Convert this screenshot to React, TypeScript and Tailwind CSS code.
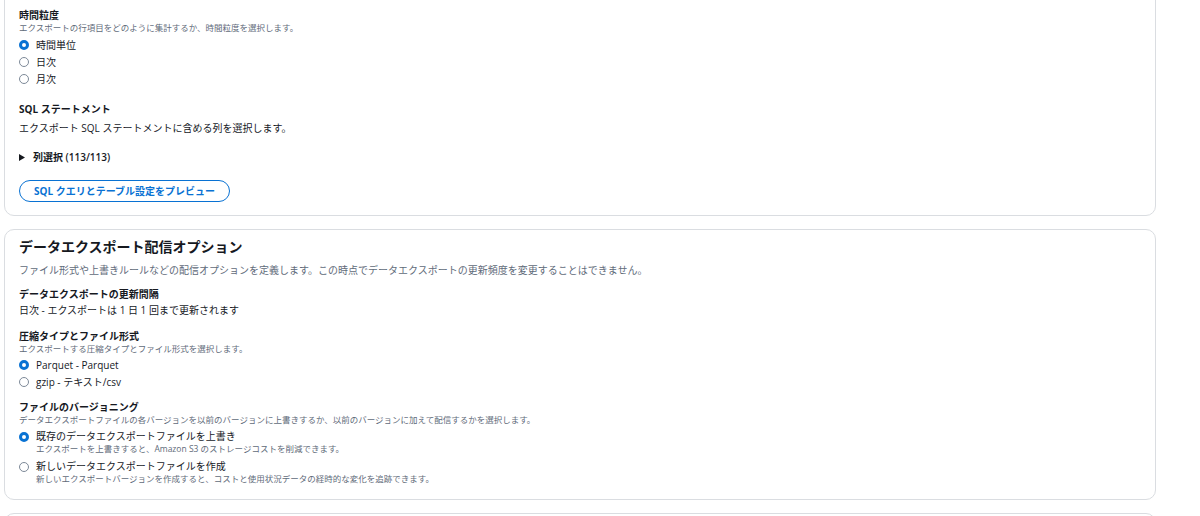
function Radio({ checked }: { checked?: boolean }) {
  return checked ? (
    <span className="box-border block h-[10px] w-[10px] shrink-0 rounded-full border-[3px] border-[#0972d3] bg-white" />
  ) : (
    <span className="box-border block h-[10px] w-[10px] shrink-0 rounded-full border border-[#7d8998] bg-white" />
  );
}

function Option({ label, checked }: { label: string; checked?: boolean }) {
  return (
    <div className="flex h-[17px] items-center gap-[7px]">
      <Radio checked={checked} />
      <span className="text-[10px] leading-[14px] text-[#16191f]">{label}</span>
    </div>
  );
}

function DescOption({ label, desc, checked }: { label: string; desc: string; checked?: boolean }) {
  return (
    <div className="flex flex-col">
      <div className="flex h-[13px] items-center gap-[7px]">
        <Radio checked={checked} />
        <span className="text-[10px] leading-[13px] text-[#16191f]">{label}</span>
      </div>
      <span className="pl-[17px] text-[8.5px] leading-[12px] text-[#5f6b7a]">{desc}</span>
    </div>
  );
}

function Label({ children, className = "" }: { children: React.ReactNode; className?: string }) {
  return <div className={`text-[10px] font-bold leading-[14px] text-[#16191f] ${className}`}>{children}</div>;
}

function Hint({ children, className = "" }: { children: React.ReactNode; className?: string }) {
  return <div className={`text-[8.5px] leading-[12px] text-[#5f6b7a] ${className}`}>{children}</div>;
}

export default function App() {
  return (
    <div className="h-[516px] w-[1200px] overflow-hidden bg-white font-['Open_Sans','Noto_Sans_CJK_JP',sans-serif]">
      <div className="flex w-[1156px] flex-col gap-[13px] pl-[4px]">
        {/* time granularity + SQL */}
        <section className="-mt-[13px] flex flex-col rounded-[10px] border border-[#dadde1] px-[14px] pb-[13px] pt-[20px]">
          <Label>時間粒度</Label>
          <Hint>エクスポートの行項目をどのように集計するか、時間粒度を選択します。</Hint>
          <div className="mt-[2px] flex flex-col">
            <Option label="時間単位" checked />
            <Option label="日次" />
            <Option label="月次" />
          </div>
          <Label className="mt-[15px]">SQL ステートメント</Label>
          <div className="mt-[5px] text-[10px] leading-[14px] text-[#16191f]">
            エクスポート SQL ステートメントに含める列を選択します。
          </div>
          <div className="mt-[15px] flex items-center gap-[8px] text-[10px] leading-[14px] text-[#16191f]">
            <svg width="6" height="7" viewBox="0 0 6 7" className="shrink-0">
              <path d="M0 0 L6 3.5 L0 7 Z" fill="#16191f" />
            </svg>
            <span className="font-bold">
              列選択 <span className="font-semibold">(113/113)</span>
            </span>
          </div>
          <div className="mt-[16px]">
            <button className="flex h-[22px] w-[211px] items-center justify-center rounded-full border border-[#0972d3] bg-white text-[10px] font-bold text-[#0972d3]">
              SQL クエリとテーブル設定をプレビュー
            </button>
          </div>
        </section>

        {/* delivery options */}
        <section className="flex flex-col rounded-[10px] border border-[#dadde1] px-[14px] pb-[14px] pt-[8px]">
          <h2 className="text-[14px] font-bold leading-[18px] text-[#16191f]">データエクスポート配信オプション</h2>
          <div className="mt-[7px] text-[10px] leading-[14px] text-[#5f6b7a]">
            ファイル形式や上書きルールなどの配信オプションを定義します。この時点でデータエクスポートの更新頻度を変更することはできません。
          </div>
          <Label className="mt-[10px]">データエクスポートの更新間隔</Label>
          <div className="mt-[2px] text-[10px] leading-[14px] text-[#16191f]">
            日次 - エクスポートは 1 日 1 回まで更新されます
          </div>
          <Label className="mt-[12px]">圧縮タイプとファイル形式</Label>
          <Hint>エクスポートする圧縮タイプとファイル形式を選択します。</Hint>
          <div className="mt-[1px] flex flex-col">
            <Option label="Parquet - Parquet" checked />
            <Option label="gzip - テキスト/csv" />
          </div>
          <Label className="mt-[10px]">ファイルのバージョニング</Label>
          <Hint>データエクスポートファイルの各バージョンを以前のバージョンに上書きするか、以前のバージョンに加えて配信するかを選択します。</Hint>
          <div className="mt-[4px] flex flex-col gap-[5px]">
            <DescOption
              label="既存のデータエクスポートファイルを上書き"
              desc="エクスポートを上書きすると、Amazon S3 のストレージコストを削減できます。"
              checked
            />
            <DescOption
              label="新しいデータエクスポートファイルを作成"
              desc="新しいエクスポートバージョンを作成すると、コストと使用状況データの経時的な変化を追跡できます。"
            />
          </div>
        </section>

        {/* next container, cut off */}
        <section className="h-[60px] rounded-[10px] border border-[#dadde1]" />
      </div>
    </div>
  );
}
